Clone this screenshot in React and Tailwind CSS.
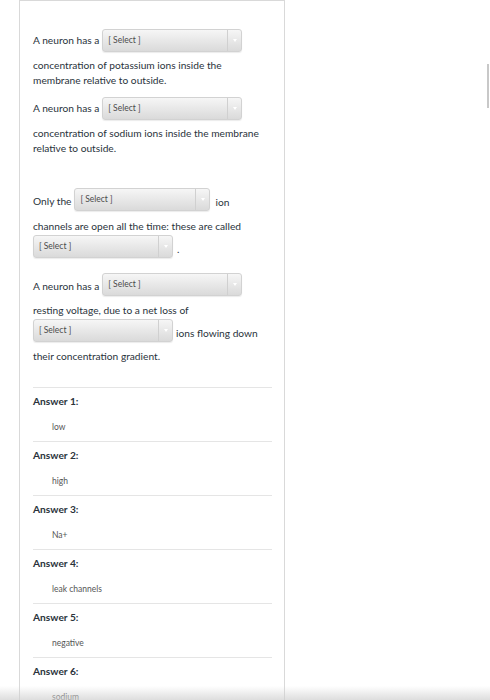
import React from "react";

function Dropdown({ width = "w-[140px]" }) {
  return (
    <div
      className={`${width} h-[23px] shrink-0 flex items-stretch rounded-[3px] border border-[#d2d2d2] bg-gradient-to-b from-[#f6f6f6] to-[#dadada] shadow-[0_1px_1px_rgba(0,0,0,0.08)]`}
    >
      <div className="flex-1 pl-[5px] pt-[5px] text-[8.5px] leading-[10px] text-[#4a4a4a]">[ Select ]</div>
      <div className="w-[14px] border-l border-[#d0d0d0] flex items-center justify-center">
        <span className="block w-0 h-0 border-l-[2px] border-r-[2px] border-t-[3px] border-l-transparent border-r-transparent border-t-white" />
      </div>
    </div>
  );
}

const answers = ["low", "high", "Na+", "leak channels", "negative", "sodium"];

export default function App() {
  return (
    <div className="relative w-[490px] h-[700px] overflow-hidden bg-white font-['Lato','Open_Sans',sans-serif] text-[10.2px] leading-[15px] text-[#2a333b]">
      <div className="ml-[19px] w-[266px] min-h-[700px] border-x border-t border-[#d9d9d9] pl-[13px] pr-[12px]">
        <div className="mt-[28px] flex items-center gap-[3px]">
          <span>A neuron has a</span>
          <Dropdown />
        </div>
        <p className="mt-[6px]">
          concentration of potassium ions inside the
          <br />
          membrane relative to outside.
        </p>

        <div className="mt-[9px] flex items-center gap-[3px]">
          <span>A neuron has a</span>
          <Dropdown />
        </div>
        <p className="mt-[6px]">
          concentration of sodium ions inside the membrane
          <br />
          relative to outside.
        </p>

        <div className="mt-[32px] flex items-center gap-[3px]">
          <span className="pt-[3px]">Only the</span>
          <Dropdown width="w-[136px]" />
          <span className="pt-[5px] ml-[2px]">ion</span>
        </div>
        <p className="mt-[8px]">channels are open all the time: these are called</p>
        <div className="mt-[1px] flex items-end gap-[4px]">
          <Dropdown />
          <span className="pb-[1px]">.</span>
        </div>

        <div className="mt-[15px] flex items-center gap-[3px]">
          <span className="pt-[3px]">A neuron has a</span>
          <Dropdown />
        </div>
        <p className="mt-[7px]">resting voltage, due to a net loss of</p>
        <div className="mt-[1px] flex items-center gap-[3px]">
          <Dropdown />
          <span className="pt-[6px]">ions flowing down</span>
        </div>
        <p className="mt-[7px]">their concentration gradient.</p>

        <div className="mt-[23px]">
          {answers.map((a, i) => (
            <div key={i} className="border-t border-[#e5e5e5] pt-[6px] pb-[6px]">
              <div className="font-bold">Answer {i + 1}:</div>
              <div className="mt-[11px] pl-[19px] text-[8.5px] text-[#555]">{a}</div>
            </div>
          ))}
        </div>
      </div>

      <div className="absolute left-[487px] top-[64px] w-[2px] h-[44px] bg-[#c8c8c8]" />
      <div className="absolute left-0 bottom-0 w-full h-[14px] bg-gradient-to-b from-transparent to-[#cfcfcf]/70" />
    </div>
  );
}
